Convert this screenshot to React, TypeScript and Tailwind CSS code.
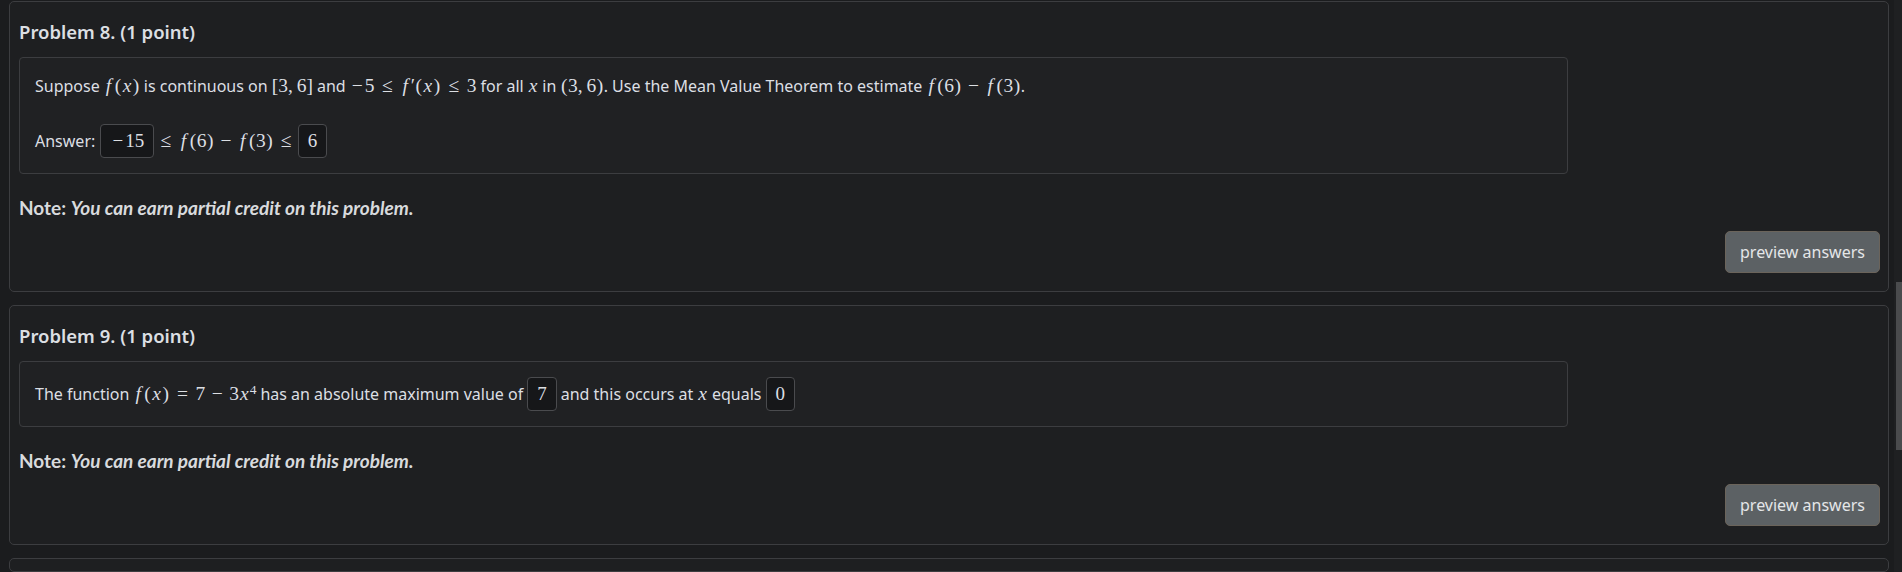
import React from "react";
import clsx from "clsx";

const mathFont = { fontFamily: '"Liberation Serif", "DejaVu Serif", serif' };

/* italic math letters, padded out to computer-modern widths */
function F() {
    return <span className="italic pl-[2px] pr-[3px]">f</span>;
}

function X() {
    return <span className="italic px-[1px]">x</span>;
}

function L() {
    return <span className="px-[0.5px]">(</span>;
}

function R() {
    return <span className="px-[0.5px]">)</span>;
}

/* relation (≤, =) */
function Rel({ children, edge }: { children: React.ReactNode; edge?: "start" | "end" }) {
    return (
        <span
            className={clsx(
                "inline-block w-[15px] text-center",
                edge === "start" ? "mr-[5.5px]" : edge === "end" ? "ml-[5.5px]" : "mx-[5.5px]"
            )}
        >
            {children}
        </span>
    );
}

/* binary minus */
function Bin({ children }: { children: React.ReactNode }) {
    return <span className="inline-block w-[15px] text-center mx-[4.5px]">{children}</span>;
}

function Neg() {
    return <span className="inline-block w-[15px] text-center">−</span>;
}

function M({ children }: { children: React.ReactNode }) {
    return (
        <span className="text-[19.5px] leading-none mx-[4px] whitespace-nowrap" style={mathFont}>
            {children}
        </span>
    );
}

function AnswerBox({ children }: { children: React.ReactNode }) {
    return (
        <span
            className="inline-flex items-center justify-center h-[34px] px-[9px] align-middle rounded-[4px] border border-[#4a4b4e] bg-[#161719] text-[19px] text-[#dcdfe3]"
            style={mathFont}
        >
            {children}
        </span>
    );
}

function PreviewButton() {
    return (
        <div className="flex justify-end">
            <button className="h-[42px] w-[155px] rounded-[5px] border border-[#6b645b] bg-[#5c6164] text-[16px] text-[#e4e6e8]">
                preview answers
            </button>
        </div>
    );
}

function Note() {
    return (
        <p
            className="mt-[22px] text-[19px] font-bold leading-[24px] text-[#d8dadd]"
            style={{ fontFamily: 'Lato, "Noto Sans", sans-serif' }}
        >
            Note: <i>You can earn partial credit on this problem.</i>
        </p>
    );
}

function ProblemCard({ num, children }: { num: number; children: React.ReactNode }) {
    return (
        <section className="rounded-[5px] border border-[#3c3d40] bg-[#1e1f21] pl-[9px] pr-[8px] pt-[16px] pb-[18px]">
            <h3 className="text-[18.5px] font-semibold leading-[27px] text-[#dcdfe3]">
                Problem {num}. <span>(1 point)</span>
            </h3>
            <div className="mt-[12px] w-[1549px] rounded-[4px] border border-[#3c3d40] bg-[#202123] px-[15px] py-[15px] text-[16px] text-[#dcdfe3]">
                {children}
            </div>
            <Note />
            <div className="mt-[11px]">
                <PreviewButton />
            </div>
        </section>
    );
}

export default function App() {
    return (
        <div
            className="flex h-[572px] overflow-hidden bg-[#1b1c1e]"
            style={{ fontFamily: '"Noto Sans", "Open Sans", sans-serif' }}
        >
            <div className="flex flex-1 flex-col gap-[13px] pl-[9px] pr-[5px] pt-[1px]">
                {/* PROBLEM 8 */}
                <ProblemCard num={8}>
                    <p className="h-[26px] leading-[26px]">
                        Suppose
                        <M>
                            <F /><L /><X /><R />
                        </M>
                        is continuous on
                        <M>[3,&thinsp;6]</M>
                        and
                        <M>
                            <Neg />5<Rel>≤</Rel><F />′<L /><X /><R /><Rel>≤</Rel>3
                        </M>
                        for all
                        <M>
                            <X />
                        </M>
                        in
                        <M>
                            <L />3,&thinsp;6<R />
                        </M>
                        <span className="-ml-[4px]">. Use the Mean Value Theorem to estimate</span>
                        <M>
                            <F /><L />6<R /><Bin>−</Bin><F /><L />3<R />
                        </M>
                        <span className="-ml-[4px]">.</span>
                    </p>
                    <p className="mt-[25px] flex h-[34px] items-center">
                        <span className="mr-[5px]">Answer:</span>
                        <AnswerBox>
                            <Neg />15
                        </AnswerBox>
                        <M>
                            <Rel edge="start">≤</Rel><F /><L />6<R /><Bin>−</Bin><F /><L />3<R /><Rel edge="end">≤</Rel>
                        </M>
                        <AnswerBox>6</AnswerBox>
                    </p>
                </ProblemCard>

                {/* PROBLEM 9 */}
                <ProblemCard num={9}>
                    <p className="flex h-[34px] items-center">
                        The function
                        <M>
                            <F /><L /><X /><R /><Rel>=</Rel>7<Bin>−</Bin>3<X />
                            <sup className="text-[13.5px]">4</sup>
                        </M>
                        has an absolute maximum value of
                        <span className="mx-[4px]">
                            <AnswerBox>7</AnswerBox>
                        </span>
                        and this occurs at
                        <M>
                            <X />
                        </M>
                        equals
                        <span className="ml-[4px]">
                            <AnswerBox>0</AnswerBox>
                        </span>
                    </p>
                </ProblemCard>

                <section className="h-[40px] rounded-[5px] border border-[#3c3d40] bg-[#1e1f21]" />
            </div>

            {/* scrollbar */}
            <div className="w-[8px] bg-[#1f2022] pt-[282px]">
                <div className="ml-[2px] h-[168px] w-[6px] bg-[#4a4b4d]" />
            </div>
        </div>
    );
}
